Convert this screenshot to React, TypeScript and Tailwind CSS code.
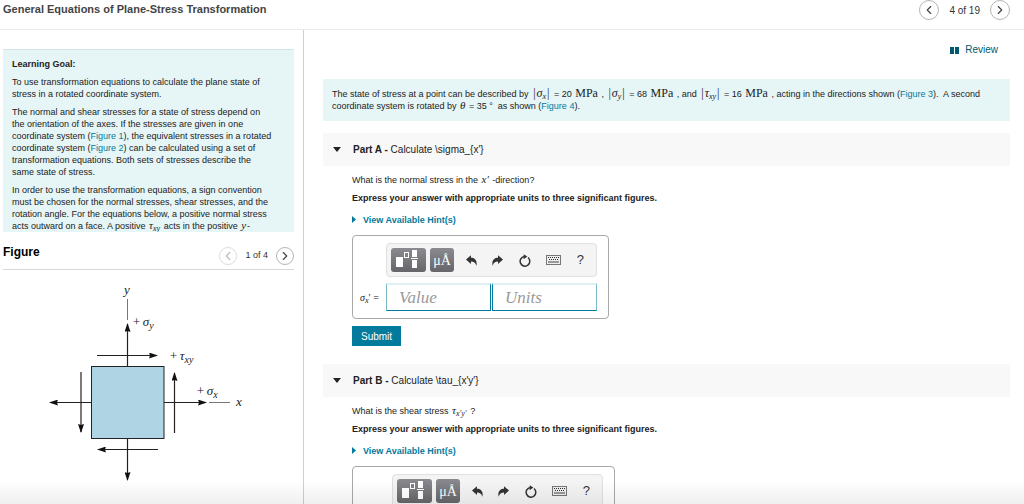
import type { ReactNode } from 'react';
import { ChevronLeft, ChevronRight } from 'lucide-react';

function MathText({ children }: { children: ReactNode }) {
  return (
    <span className="px-px font-['Liberation_Serif',serif] text-[11px] leading-none italic">
      {children}
    </span>
  );
}

function Sub({ children }: { children: ReactNode }) {
  return <sub className="text-[8px]">{children}</sub>;
}

function Abs({ children }: { children: ReactNode }) {
  return (
    <span className="mx-[2px] font-['Liberation_Serif',serif] text-[12px] leading-none">
      |<i className="px-px">{children}</i>|
    </span>
  );
}

function MPa() {
  return (
    <span className="mx-px font-['Liberation_Serif',serif] text-[12px] leading-none">MPa</span>
  );
}

function FigureLink({ n }: { n: number }) {
  return (
    <a href={`#figure-${n}`} className="text-[#047a9c]">
      Figure {n}
    </a>
  );
}

function Pager({ label, small, atStart }: { label: string; small?: boolean; atStart?: boolean }) {
  const size = small ? 'size-[18px]' : 'size-5';
  return (
    <div
      className={`flex items-center text-[#333] ${small ? 'gap-2 text-[9px]' : 'gap-[10px] text-[10px]'}`}
    >
      <button
        aria-label="Previous"
        disabled={atStart}
        className={`${size} flex items-center justify-center rounded-full border border-[#b4b4b4] text-[#444] disabled:border-[#dcdcdc] disabled:text-[#bbb]`}
      >
        <ChevronLeft className="size-[14px]" strokeWidth={2} />
      </button>
      <span>{label}</span>
      <button
        aria-label="Next"
        className={`${size} flex items-center justify-center rounded-full border border-[#b4b4b4] text-[#444]`}
      >
        <ChevronRight className="size-[14px]" strokeWidth={2} />
      </button>
    </div>
  );
}

function StressFigure() {
  return (
    <svg viewBox="3 0 291 232" className="w-full" role="img" aria-label="Plane stress element">
      <defs>
        <marker
          id="head"
          viewBox="0 0 9 6"
          refX="8"
          refY="3"
          markerWidth="9"
          markerHeight="6"
          markerUnits="userSpaceOnUse"
          orient="auto"
        >
          <path d="M0 0L9 3L0 6L1 3Z" fill="#111" />
        </marker>
      </defs>
      <g stroke="#777" strokeWidth="1">
        <path d="M127.5 29V50" />
        <path d="M209 132.5H230" />
      </g>
      <g stroke="#222" strokeWidth="1.2">
        <path d="M127.5 96V54" markerEnd="url(#head)" />
        <path d="M127.5 168V210" markerEnd="url(#head)" />
        <path d="M91 132.5H50" markerEnd="url(#head)" />
        <path d="M164 132.5H206" markerEnd="url(#head)" />
        <path d="M97 85.5H157" markerEnd="url(#head)" />
        <path d="M158 179.5H98" markerEnd="url(#head)" />
        <path d="M81 102V162" markerEnd="url(#head)" />
        <path d="M174.5 163V103" markerEnd="url(#head)" />
      </g>
      <rect x="91.5" y="96.5" width="72.5" height="72" fill="#afd4e3" stroke="#222" />
      <g fill="#222" className="font-['Liberation_Serif',serif] text-[13px] italic">
        <text x="124" y="24">y</text>
        <text x="236" y="136">x</text>
        <text x="132" y="56">
          +<tspan dx="2">σ</tspan>
          <tspan dy="3" fontSize="10">y</tspan>
        </text>
        <text x="169" y="90">
          +<tspan dx="2">τ</tspan>
          <tspan dy="3" fontSize="10">xy</tspan>
        </text>
        <text x="196" y="125">
          +<tspan dx="2">σ</tspan>
          <tspan dy="3" fontSize="10">x</tspan>
        </text>
      </g>
    </svg>
  );
}

const toolButton =
  'flex h-6 items-center justify-center rounded-[3px] bg-linear-to-b from-[#8a8a90] to-[#66666a] text-white';

function Toolbar() {
  return (
    <div className="flex h-[34px] w-[211px] items-center rounded-[4px] border border-[#e0e0e0] bg-[#f4f4f4] pl-1 text-[#333]">
      <button aria-label="Templates" className={`${toolButton} w-[35px]`}>
        <svg viewBox="0 0 35 24" className="h-6 w-[35px]" fill="#fff">
          <rect x="5" y="9" width="7" height="10" />
          <rect x="13.5" y="4.5" width="4" height="5" fill="none" stroke="#fff" />
          <rect x="21" y="2" width="5" height="7" />
          <path d="M20 10H27V11H20Z" />
          <rect x="21" y="12" width="5" height="8" />
        </svg>
      </button>
      <button
        aria-label="Symbols"
        className={`${toolButton} ml-1 w-6 font-['Liberation_Serif',serif] text-[14px]`}
      >
        μÅ
      </button>
      <div className="flex flex-1 items-center justify-between px-3">
        <button aria-label="Undo">
          <svg viewBox="0 0 31 30" className="size-[11px]" fill="#333">
            <path d="M0 12L14 0V7C25 7 33 15 29 30C27 21 22 18 14 18V25Z" />
          </svg>
        </button>
        <button aria-label="Redo">
          <svg viewBox="0 0 31 30" className="size-[11px]" fill="#333">
            <path d="M31 12L17 0V7C6 7 -2 15 2 30C4 21 9 18 17 18V25Z" />
          </svg>
        </button>
        <button aria-label="Reset">
          <svg viewBox="0 0 36 38" className="h-[13px] w-3" fill="none">
            <path d="M27 10A14.5 14.5 0 1 1 16 7" stroke="#333" strokeWidth="4.5" />
            <path d="M14 0L25 7L14 15Z" fill="#333" />
          </svg>
        </button>
        <button aria-label="Keyboard shortcuts">
          <svg viewBox="0 0 15 10" className="h-[10px] w-[15px]">
            <rect x="0.5" y="0.5" width="14" height="9" fill="#eee" stroke="#777" />
            <path d="M2 2.5H13M3 4.5H13" stroke="#333" strokeDasharray="1 1" />
            <path d="M2 7H13" stroke="#444" />
          </svg>
        </button>
        <button aria-label="Help" className="text-[13px]">
          ?
        </button>
      </div>
    </div>
  );
}

const field =
  "h-7 w-[105px] border border-t-2 border-[#047a9c] border-t-[#dff0f3] bg-white pl-3 font-['Liberation_Serif',serif] text-[17px] italic outline-none placeholder:text-[#999]";

function AnswerBox({ id, label, wide }: { id: string; label: ReactNode; wide?: boolean }) {
  return (
    <div
      className={`flex w-fit flex-col items-end gap-[6px] rounded-[4px] border border-[#a9a9a9] bg-white py-[7px] pr-[11px] ${wide ? 'pl-[11px]' : 'pl-[7px]'}`}
    >
      <Toolbar />
      <div className="flex items-center">
        <label
          htmlFor={`${id}-value`}
          className={`font-['Liberation_Serif',serif] text-[10px] ${wide ? 'w-7' : 'w-[26px]'}`}
        >
          {label}
        </label>
        <div className="flex gap-px">
          <input
            id={`${id}-value`}
            placeholder="Value"
            className={`${field} border-l-[#7bb8c9]`}
          />
          <input
            id={`${id}-units`}
            aria-label="Units"
            placeholder="Units"
            className={`${field} border-r-[#7bb8c9]`}
          />
        </div>
      </div>
    </div>
  );
}

interface PartProps {
  id: string;
  name: string;
  task: string;
  question: ReactNode;
  label: ReactNode;
  wide?: boolean;
}

function Part({ id, name, task, question, label, wide }: PartProps) {
  return (
    <section>
      <h2 className="bg-[#f8f8f8]">
        <button className="flex h-[33px] w-full items-center pl-[10px] text-[10px] text-[#222]">
          <svg viewBox="0 0 8 5" className="mr-3 h-[5px] w-2">
            <path d="M0 0H8L4 5Z" fill="#222" />
          </svg>
          <span>
            <b>{name} -</b> {task}
          </span>
        </button>
      </h2>
      <div className="flex flex-col items-start pt-2 pl-[29px]">
        <p className="leading-3">{question}</p>
        <p className="mt-[6px] leading-3 font-bold">
          Express your answer with appropriate units to three significant figures.
        </p>
        <button className="my-[9px] flex h-[13px] items-center gap-[7px] leading-3 font-bold text-[#047a9c]">
          <svg viewBox="0 0 4 7" className="h-[7px] w-1">
            <path d="M0 0L4 3.5L0 7Z" fill="#047a9c" />
          </svg>
          View Available Hint(s)
        </button>
        <AnswerBox id={id} label={label} wide={wide} />
        <button className="mt-[7px] h-5 bg-[#047a9c] px-[9px] text-[10px] text-white">Submit</button>
      </div>
    </section>
  );
}

export default function App() {
  return (
    <div className="relative flex h-screen flex-col overflow-hidden bg-white font-['Liberation_Sans',Arial,sans-serif] text-[9px] text-[#222]">
      <header className="flex h-[30px] shrink-0 items-start justify-between border-b border-[#e9e9e9] pr-[14px] pl-[3px]">
        <h1 className="pt-[3px] text-[11px] leading-[13px] font-bold text-[#444]">
          General Equations of Plane-Stress Transformation
        </h1>
        <Pager label="4 of 19" />
      </header>

      <div className="flex min-h-0 flex-1">
        <aside className="flex w-[304px] shrink-0 flex-col border-r border-[#c8d0e0] pt-[19px] pr-[9px] pl-[3px]">
          <div className="flex h-[183px] shrink-0 flex-col gap-[6px] overflow-y-auto border-t border-[#d3e3e4] bg-[#e6f5f6] pt-2 pr-[21px] pl-[9px] leading-3 [scrollbar-width:none]">
            <h2 className="font-bold">Learning Goal:</h2>
            <p>
              To use transformation equations to calculate the plane state of stress in a rotated
              coordinate system.
            </p>
            <p>
              The normal and shear stresses for a state of stress depend on the orientation of the
              axes. If the stresses are given in one coordinate system (<FigureLink n={1} />), the
              equivalent stresses in a rotated coordinate system (<FigureLink n={2} />) can be
              calculated using a set of transformation equations. Both sets of stresses describe the
              same state of stress.
            </p>
            <p>
              In order to use the transformation equations, a sign convention must be chosen for the
              normal stresses, shear stresses, and the rotation angle. For the equations below, a
              positive normal stress acts outward on a face. A positive{' '}
              <MathText>
                τ<Sub>xy</Sub>
              </MathText>{' '}
              acts in the positive <MathText>y</MathText>-
            </p>
          </div>
          <div className="mt-[11px] flex h-[27px] shrink-0 items-center justify-between border-b border-[#d8d8d8]">
            <h2 className="pb-2 text-[12px] leading-4 font-bold text-black">Figure</h2>
            <Pager label="1 of 4" small atStart />
          </div>
          <StressFigure />
        </aside>

        <main className="flex min-w-0 flex-1 flex-col overflow-hidden pr-[14px] pl-[19px]">
          <div className="flex h-[49px] shrink-0 items-start justify-end pt-[14px] pr-3">
            <a
              href="#review"
              className="flex items-center gap-[6px] text-[10px] leading-3 text-[#00596e]"
            >
              <svg viewBox="0 0 9 7" className="h-[7px] w-[9px]" fill="#00596e">
                <path d="M0 0H4V7H0ZM5 0H9V7H5Z" />
              </svg>
              Review
            </a>
          </div>
          <p className="mb-3 h-[42px] shrink-0 bg-[#e6f5f6] pt-2 pr-3 pl-[9px] leading-3">
            The state of stress at a point can be described by{' '}
            <Abs>
              σ<Sub>x</Sub>
            </Abs>{' '}
            = 20 <MPa /> ,{' '}
            <Abs>
              σ<Sub>y</Sub>
            </Abs>{' '}
            = 68 <MPa /> , and{' '}
            <Abs>
              τ<Sub>xy</Sub>
            </Abs>{' '}
            = 16 <MPa /> , acting in the directions shown (<FigureLink n={3} />
            ).&nbsp; A second coordinate system is rotated by <MathText>θ</MathText> = 35 °&nbsp; as
            shown (<FigureLink n={4} />
            ).
          </p>
          <div className="flex flex-col gap-[18px]">
            <Part
              id="sigma"
              name="Part A"
              task="Calculate \sigma_{x'}"
              question={
                <>
                  What is the normal stress in the <MathText>x′</MathText> -direction?
                </>
              }
              label={
                <>
                  <i>
                    σ<Sub>x</Sub>
                  </i>
                  ′ =
                </>
              }
            />
            <Part
              id="tau"
              name="Part B"
              task="Calculate \tau_{x'y'}"
              question={
                <>
                  What is the shear stress{' '}
                  <MathText>
                    τ<Sub>x′y′</Sub>
                  </MathText>{' '}
                  ?
                </>
              }
              label={
                <>
                  <i>
                    τ<Sub>x′y′</Sub>
                  </i>{' '}
                  =
                </>
              }
              wide
            />
          </div>
        </main>
      </div>
      <div className="pointer-events-none absolute inset-x-0 bottom-0 h-6 bg-linear-to-b from-transparent to-black/6" />
    </div>
  );
}
